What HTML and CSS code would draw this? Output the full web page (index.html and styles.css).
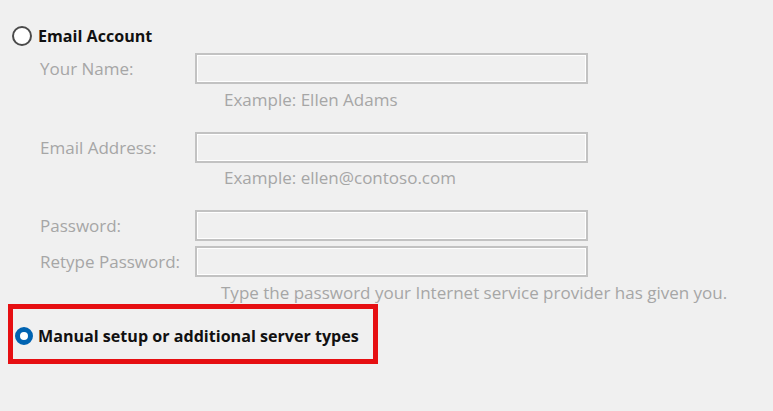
FILE: index.html
```html
<!DOCTYPE html>
<html>
<head>
<meta charset="utf-8">
<link rel="stylesheet" href="styles.css">
</head>
<body>
<div class="page">
  <div class="option option-top">
    <span class="radio"></span>
    <span class="option-label">Email Account</span>
  </div>
  <div class="form">
    <div class="row row-name">
      <span class="label">Your Name:</span>
      <span class="input"></span>
    </div>
    <div class="hint hint-1">Example: Ellen Adams</div>
    <div class="row row-email">
      <span class="label">Email Address:</span>
      <span class="input"></span>
    </div>
    <div class="hint hint-2">Example: ellen@contoso.com</div>
    <div class="row row-pass">
      <span class="label">Password:</span>
      <span class="input"></span>
    </div>
    <div class="row row-retype">
      <span class="label">Retype Password:</span>
      <span class="input"></span>
    </div>
    <div class="hint hint-3">Type the password your Internet service provider has given you.</div>
  </div>
  <div class="highlight">
    <div class="option">
      <span class="radio radio-on"></span>
      <span class="option-label">Manual setup or additional server types</span>
    </div>
  </div>
</div>
</body>
</html>
```
FILE: styles.css
```css
html, body {
  margin: 0;
  padding: 0;
  background: #f0f0f0;
}
body {
  width: 773px;
  height: 411px;
  overflow: hidden;
  font-family: "Open Sans", "Noto Sans", sans-serif;
}
.page {
  padding-top: 26px;
}
.option {
  display: flex;
  align-items: center;
  height: 20px;
}
.option-top {
  padding-left: 12px;
}
.radio {
  box-sizing: border-box;
  width: 20px;
  height: 20px;
  border: 2px solid #4a4a4a;
  border-radius: 50%;
  background: #fff;
  flex: none;
}
.option-label {
  margin-left: 6px;
  font-weight: 700;
  font-size: 16.1px;
  color: #111;
}
.form {
  display: flex;
  flex-direction: column;
  padding-left: 40px;
}
.row {
  display: flex;
  align-items: center;
  height: 31px;
}
.label {
  width: 155px;
  font-size: 17px;
  color: #a6a6a6;
  white-space: nowrap;
}
.input {
  box-sizing: border-box;
  width: 393px;
  height: 31px;
  border: 2px solid #c2c2c2;
  box-shadow: inset 0 0 0 1px #ffffff;
  background: #f0f0f0;
  flex: none;
}
.row-name { margin-top: 7px; }
.hint {
  padding-left: 184px;
  font-size: 17px;
  color: #a6a6a6;
  height: 20px;
  line-height: 20px;
  white-space: nowrap;
}
.hint-1 { margin-top: 6px; }
.row-email { margin-top: 22px; }
.hint-2 { margin-top: 5px; }
.row-pass { margin-top: 22px; }
.row-retype { margin-top: 5px; }
.hint-3 { margin-top: 6px; padding-left: 181px; }
.highlight {
  box-sizing: border-box;
  margin-top: 1px;
  margin-left: 8px;
  width: 370px;
  height: 60px;
  border: 5px solid #e60f12;
  display: flex;
  align-items: center;
  padding-left: 2px;
  padding-top: 4px;
}
.radio-on {
  width: 18px;
  height: 18px;
  border: 5px solid #0063b1;
  background: #fff;
}
.highlight .option-label {
  margin-left: 5px;
}
```
